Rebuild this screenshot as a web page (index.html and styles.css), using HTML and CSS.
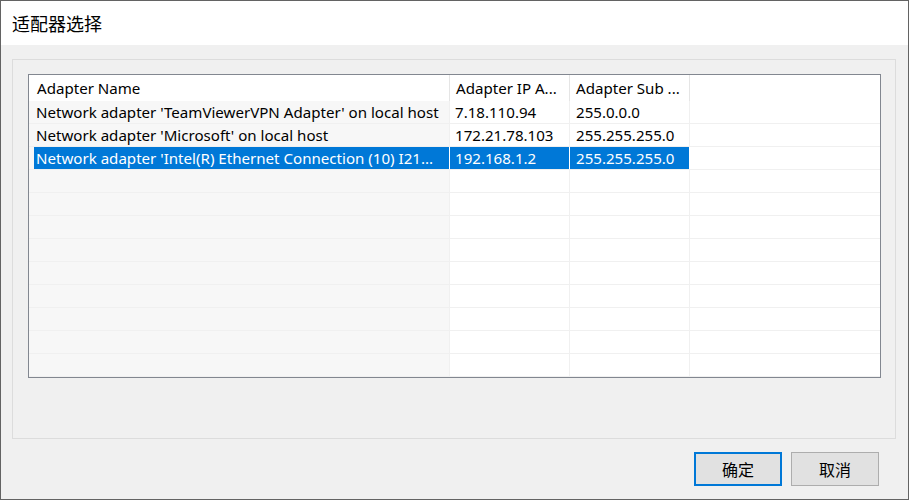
FILE: index.html
```html
<!DOCTYPE html>
<html lang="zh-CN">
<head>
<meta charset="utf-8">
<title>适配器选择</title>
<link rel="stylesheet" href="styles.css">
</head>
<body>
<div class="window">
  <div class="titlebar">适配器选择</div>
  <div class="content">
    <div class="group">
      <div class="list">
        <div class="row header">
          <div class="cell c1">Adapter Name</div>
          <div class="cell c2">Adapter IP A...</div>
          <div class="cell c3">Adapter Sub ...</div>
          <div class="cell fill"></div>
        </div>
        <div class="row">
          <div class="cell c1">Network adapter 'TeamViewerVPN Adapter' on local host</div>
          <div class="cell c2">7.18.110.94</div>
          <div class="cell c3">255.0.0.0</div>
          <div class="cell fill"></div>
        </div>
        <div class="row">
          <div class="cell c1">Network adapter 'Microsoft' on local host</div>
          <div class="cell c2">172.21.78.103</div>
          <div class="cell c3">255.255.255.0</div>
          <div class="cell fill"></div>
        </div>
        <div class="row selected">
          <div class="cell c1">Network adapter 'Intel(R) Ethernet Connection (10) I21...</div>
          <div class="cell c2">192.168.1.2</div>
          <div class="cell c3">255.255.255.0</div>
          <div class="cell fill"></div>
        </div>
        <div class="row"><div class="cell c1"></div><div class="cell c2"></div><div class="cell c3"></div><div class="cell fill"></div></div>
        <div class="row"><div class="cell c1"></div><div class="cell c2"></div><div class="cell c3"></div><div class="cell fill"></div></div>
        <div class="row"><div class="cell c1"></div><div class="cell c2"></div><div class="cell c3"></div><div class="cell fill"></div></div>
        <div class="row"><div class="cell c1"></div><div class="cell c2"></div><div class="cell c3"></div><div class="cell fill"></div></div>
        <div class="row"><div class="cell c1"></div><div class="cell c2"></div><div class="cell c3"></div><div class="cell fill"></div></div>
        <div class="row"><div class="cell c1"></div><div class="cell c2"></div><div class="cell c3"></div><div class="cell fill"></div></div>
        <div class="row"><div class="cell c1"></div><div class="cell c2"></div><div class="cell c3"></div><div class="cell fill"></div></div>
        <div class="row"><div class="cell c1"></div><div class="cell c2"></div><div class="cell c3"></div><div class="cell fill"></div></div>
        <div class="row"><div class="cell c1"></div><div class="cell c2"></div><div class="cell c3"></div><div class="cell fill"></div></div>
      </div>
    </div>
    <div class="actions">
      <button class="btn primary">确定</button>
      <button class="btn">取消</button>
    </div>
  </div>
</div>
</body>
</html>
```
FILE: styles.css
```css
html, body {
  margin: 0;
  padding: 0;
  background: #ffffff;
}

.window {
  width: 909px;
  height: 500px;
  box-sizing: border-box;
  border: 1px solid #636363;
  display: flex;
  flex-direction: column;
  font-family: "Noto Sans", "Noto Sans CJK SC", sans-serif;
  color: #000;
}

.titlebar {
  height: 44px;
  flex: none;
  background: #ffffff;
  padding-left: 11px;
  display: flex;
  align-items: center;
  font-family: "Noto Sans CJK SC", sans-serif;
  font-size: 18px;
  padding-bottom: 1px;
  box-sizing: border-box;
}

.content {
  flex: 1;
  background: #f0f0f0;
  padding: 14px 12px 0 11px;
  display: flex;
  flex-direction: column;
}

.group {
  height: 380px;
  box-sizing: border-box;
  border: 1px solid #dcdcdc;
  padding: 14px 14px 0 15px;
}

.list {
  height: 304px;
  box-sizing: border-box;
  border: 1px solid #828790;
  background: #ffffff;
  overflow: hidden;
}

.row {
  display: flex;
  height: 23px;
  box-sizing: border-box;
  border-bottom: 1px solid #f0f0f0;
  font-size: 15.1px;
  line-height: 22px;
}

.row.header {
  height: 26px;
  border-bottom: none;
  line-height: 26px;
}

.cell {
  box-sizing: border-box;
  white-space: nowrap;
  overflow: hidden;
  border-right: 1px solid #f0f0f0;
}

.c1 {
  width: 421px;
  padding-left: 7px;
  background: #f7f7f7;
}

.c2 {
  width: 120px;
  padding-left: 5px;
}

.c3 {
  width: 120px;
  padding-left: 6px;
}

.fill {
  flex: 1;
  border-right: none;
}

.header .cell {
  background: #ffffff;
  border-right-color: #e5e5e5;
}

.header .c1 {
  padding-left: 8px;
}

.header .c2 {
  padding-left: 6px;
}

.header .fill {
  border-right: none;
}

.selected .cell {
  color: #ffffff;
}

.selected .c1 {
  background: linear-gradient(#0078d7, #0078d7) no-repeat 5px 0 / calc(100% - 5px) 100%, #f7f7f7;
  border-right-color: #ffffff;
}

.selected .c2,
.selected .c3 {
  background: #0078d7;
  border-right-color: #ffffff;
}

.actions {
  display: flex;
  justify-content: flex-end;
  gap: 9px;
  margin-top: 13px;
  padding-right: 17px;
}

.btn {
  width: 88px;
  height: 34px;
  box-sizing: border-box;
  margin: 0;
  padding: 0;
  background: #e1e1e1;
  border: 1px solid #adadad;
  font-family: "Noto Sans CJK SC", sans-serif;
  font-size: 16px;
  color: #000;
}

.btn.primary {
  border: 2px solid #0078d7;
}
```
